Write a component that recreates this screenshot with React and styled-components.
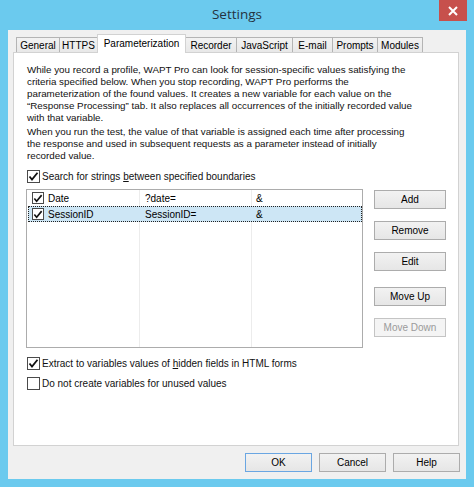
import { createGlobalStyle } from 'styled-components';
import styled from 'styled-components';

const GlobalStyle = createGlobalStyle`
  html, body {
    margin: 0;
    padding: 0;
  }
  body {
    background: #6bcaee;
    font-family: "Liberation Sans", Arial, sans-serif;
    color: #000;
  }
  * {
    box-sizing: border-box;
  }
`;

const Window = styled.div`
  width: 474px;
  height: 487px;
  background: #6bcaee;
  display: flex;
  flex-direction: column;
`;

const TitleBar = styled.div`
  height: 30px;
  display: grid;
  grid-template-columns: 1fr auto 1fr;
  align-items: center;
`;

const Title = styled.div`
  grid-column: 2;
  font-family: "Open Sans", "Noto Sans", sans-serif;
  font-size: 13.5px;
  color: #25323f;
  margin-top: -2px;
`;

const CloseButton = styled.div`
  grid-column: 3;
  justify-self: end;
  align-self: start;
  width: 28px;
  height: 21px;
  margin-right: 7px;
  background: #c7504c;
  display: flex;
  align-items: center;
  justify-content: center;
`;

const Client = styled.div`
  flex: 1;
  margin: 0 8px 8px;
  background: #f0f0f0;
  display: flex;
  flex-direction: column;
  padding-top: 4px;
`;

const TabStrip = styled.div`
  height: 18px;
  display: flex;
  align-items: flex-end;
  margin-left: 8px;
  position: relative;
  z-index: 1;
`;

const Tab = styled.div`
  width: ${(p) => p.w}px;
  height: ${(p) => (p.active ? 19 : 15)}px;
  margin-right: -1px;
  margin-bottom: ${(p) => (p.active ? -1 : 0)}px;
  border: 1px solid ${(p) => (p.active ? '#d2d2d2' : '#b4b4b4')};
  border-bottom: none;
  background: ${(p) => (p.active ? '#fff' : 'linear-gradient(#f2f2f2, #e8e8e8)')};
  position: relative;
  z-index: ${(p) => (p.active ? 2 : 0)};
  font-size: 10px;
  display: flex;
  align-items: ${(p) => (p.active ? 'flex-start' : 'center')};
  padding-top: ${(p) => (p.active ? 3 : 0)}px;
  justify-content: center;
  white-space: nowrap;
`;

const Panel = styled.div`
  flex: 1;
  margin: 0 7px 0 5px;
  background: #fff;
  border: 1px solid #d2d2d2;
  padding: 11px 12px 0 13px;
  display: flex;
  flex-direction: column;
`;

const Para = styled.p`
  margin: ${(p) => p.gap || 0}px 0 0;
  font-size: 9.8px;
  line-height: 12px;
  color: #111;
  white-space: nowrap;
`;

const CheckRow = styled.label`
  display: flex;
  align-items: center;
  height: 14px;
  gap: 2px;
  margin-top: ${(p) => p.mt || 0}px;
  font-size: 10px;
  color: #111;
  white-space: nowrap;
`;

const Box = styled.span`
  width: ${(p) => p.size || 13}px;
  height: ${(p) => p.size || 13}px;
  border: 1px solid #4a4a4a;
  background: #fff;
  display: inline-flex;
  align-items: center;
  justify-content: center;
  flex: none;
`;

const Body = styled.div`
  display: flex;
  margin-top: 6px;
  margin-left: -1px;
  gap: 11px;
`;

const List = styled.div`
  width: 338px;
  height: 159px;
  border: 1px solid #acacac;
  padding-left: 1px;
  display: flex;
  flex-direction: column;
`;

const Row = styled.div`
  display: grid;
  grid-template-columns: 112px 112px 1fr;
  height: 16px;
  background: ${(p) => (p.selected ? '#cde6f5' : 'transparent')};
  outline: ${(p) => (p.selected ? '1px dotted #222' : 'none')};
  outline-offset: -1px;
`;

const Cell = styled.div`
  display: flex;
  align-items: center;
  gap: 4px;
  padding-left: ${(p) => p.pl || 5}px;
  border-right: 1px solid ${(p) => (p.clear ? 'transparent' : '#ececec')};
  font-size: 10px;
  white-space: nowrap;
`;

const Filler = styled.div`
  flex: 1;
  display: grid;
  grid-template-columns: 112px 112px 1fr;
`;

const Side = styled.div`
  width: 72px;
  padding-top: 1px;
  display: flex;
  flex-direction: column;
`;

const Button = styled.div`
  width: ${(p) => p.w || 72}px;
  height: 19px;
  margin-top: ${(p) => p.mt || 0}px;
  border: 1px solid ${(p) => (p.primary ? '#6aa6e2' : p.disabled ? '#c4c4c4' : '#acacac')};
  background: ${(p) => (p.disabled ? '#f4f4f4' : 'linear-gradient(#f2f2f2, #e6e6e6)')};
  color: ${(p) => (p.disabled ? '#9a9a9a' : '#000')};
  font-size: 10px;
  display: flex;
  align-items: center;
  justify-content: center;
  white-space: nowrap;
`;

const Footer = styled.div`
  display: flex;
  justify-content: flex-end;
  gap: 7px;
  padding: 7px 6px 7px 0;
`;

const Check = ({ on, size }) => (
  <Box size={size}>
    {on && (
      <svg width="11" height="11" viewBox="0 0 11 11">
        <polyline points="1.5,5.5 4,8.5 9.5,1.8" fill="none" stroke="#111" strokeWidth="1.8" />
      </svg>
    )}
  </Box>
);

const tabs = [
  ['General', 44],
  ['HTTPS', 39],
  ['Parameterization', 89],
  ['Recorder', 52],
  ['JavaScript', 57],
  ['E-mail', 41],
  ['Prompts', 46],
  ['Modules', 46],
];

const rows = [
  { name: 'Date', start: '?date=', end: '&' },
  { name: 'SessionID', start: 'SessionID=', end: '&', selected: true },
];

function App() {
  return (
    <Window>
      <GlobalStyle />
      <TitleBar>
        <Title>Settings</Title>
        <CloseButton>
          <svg width="10" height="10" viewBox="0 0 10 10">
            <path d="M1 1 L9 9 M9 1 L1 9" stroke="#fff" strokeWidth="2" />
          </svg>
        </CloseButton>
      </TitleBar>
      <Client>
        <TabStrip>
          {tabs.map(([label, w]) => (
            <Tab key={label} w={w} active={label === 'Parameterization'}>
              {label}
            </Tab>
          ))}
        </TabStrip>
        <Panel>
          <Para>
            While you record a profile, WAPT Pro can look for session-specific values satisfying the
            <br />
            criteria specified below. When you stop recording, WAPT Pro performs the
            <br />
            parameterization of the found values. It creates a new variable for each value on the
            <br />
            “Response Processing” tab. It also replaces all occurrences of the initially recorded value
            <br />
            with that variable.
          </Para>
          <Para gap={2}>
            When you run the test, the value of that variable is assigned each time after processing
            <br />
            the response and used in subsequent requests as a parameter instead of initially
            <br />
            recorded value.
          </Para>
          <CheckRow mt={7}>
            <Check on />
            <span>
              Search for strings <u>b</u>etween specified boundaries
            </span>
          </CheckRow>
          <Body>
            <List>
              {rows.map((r) => (
                <Row key={r.name} selected={r.selected}>
                  <Cell pl={4} clear={r.selected}>
                    <Check on size={12} />
                    {r.name}
                  </Cell>
                  <Cell clear={r.selected}>{r.start}</Cell>
                  <Cell pl={4} clear>
                    {r.end}
                  </Cell>
                </Row>
              ))}
              <Filler>
                <Cell />
                <Cell />
                <Cell clear />
              </Filler>
            </List>
            <Side>
              <Button>Add</Button>
              <Button mt={12}>Remove</Button>
              <Button mt={12}>Edit</Button>
              <Button mt={16}>Move Up</Button>
              <Button mt={12} disabled>
                Move Down
              </Button>
            </Side>
          </Body>
          <CheckRow mt={8}>
            <Check on />
            <span>
              Extract to variables values of <u>h</u>idden fields in HTML forms
            </span>
          </CheckRow>
          <CheckRow mt={6}>
            <Check />
            <span>Do not create variables for unused values</span>
          </CheckRow>
        </Panel>
        <Footer>
          <Button w={67} primary>
            OK
          </Button>
          <Button w={67}>Cancel</Button>
          <Button w={67}>Help</Button>
        </Footer>
      </Client>
    </Window>
  );
}

export default App;
